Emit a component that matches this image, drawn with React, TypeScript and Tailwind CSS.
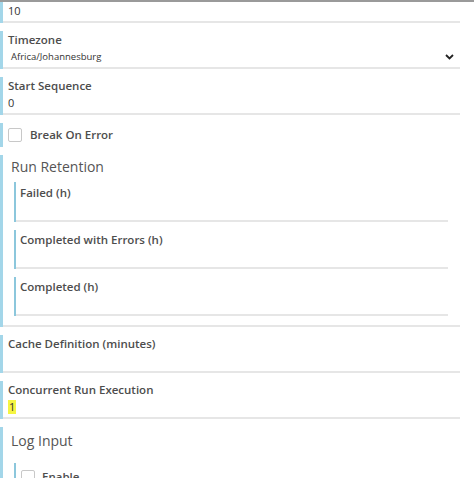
import React from "react";

const font = { fontFamily: '"Open Sans", "Noto Sans", sans-serif' };

function Field({ label, value, highlight, select }: { label: string; value?: string; highlight?: boolean; select?: boolean }) {
  return (
    <div className="flex flex-col pl-[5px] pt-[1px] pb-[1px] border-b-2 border-[#e6e6e6]">
      <div className="text-[11.5px] leading-[16px] font-semibold text-[#4d4d4d]">{label}</div>
      <div className="h-[18px] flex items-center">
        {select ? (
          <div className="flex items-center w-full pl-[3px] pr-[6px]">
            <span className="text-[9.5px] text-[#333]">{value}</span>
            <svg className="ml-auto" width="9" height="6" viewBox="0 0 9 6">
              <path d="M1 1 L4.5 4.5 L8 1" fill="none" stroke="#222" strokeWidth="1.8" />
            </svg>
          </div>
        ) : highlight ? (
          <span className="text-[11px] text-[#333] bg-[#f5f542] px-[1px] leading-[14px]">{value}</span>
        ) : (
          <span className="text-[11px] text-[#333]">{value}</span>
        )}
      </div>
    </div>
  );
}

function Row({ children, className = "" }: { children: React.ReactNode; className?: string }) {
  return (
    <div className={"flex mr-[14px] " + className}>
      <div className="w-[3px] shrink-0 bg-[#a3d6e9]" />
      <div className="flex-1 min-w-0">{children}</div>
    </div>
  );
}

function InnerRow({ children, className = "" }: { children: React.ReactNode; className?: string }) {
  return (
    <div className={"flex ml-[11px] mr-[12px] " + className}>
      <div className="w-[2px] shrink-0 bg-[#8cc7dc]" />
      <div className="flex-1 min-w-0">{children}</div>
    </div>
  );
}

function InnerField({ label, first }: { label: string; first?: boolean }) {
  return (
    <div className={"flex flex-col pl-[4px] pb-[1px] border-b-2 border-[#e6e6e6] " + (first ? "pt-[3px]" : "pt-[2px]")}>
      <div className="text-[11.5px] leading-[16px] font-semibold text-[#4d4d4d]">{label}</div>
      <div className="h-[18px]" />
    </div>
  );
}

function Checkbox() {
  return <div className="w-[14px] h-[14px] border border-[#c8c8c8] rounded-[2px] bg-white shrink-0" />;
}

export default function App() {
  return (
    <div className="w-[474px] h-[478px] overflow-hidden bg-white" style={font}>
      <div className="h-[2px] bg-[#9a9a9a]" />
      <Row>
        <div className="pl-[5px] h-[21px] flex items-center border-b-2 border-[#e6e6e6]">
          <span className="text-[11px] text-[#333]">10</span>
        </div>
      </Row>
      <Row className="mt-[8px]">
        <Field label="Timezone" value="Africa/Johannesburg" select />
      </Row>
      <Row className="mt-[8px]">
        <Field label="Start Sequence" value="0" />
      </Row>
      <Row className="mt-[8px]">
        <div className="h-[24px] flex items-center pl-[5px] gap-[8px]">
          <Checkbox />
          <span className="text-[11.5px] font-semibold text-[#4d4d4d]">Break On Error</span>
        </div>
      </Row>
      <Row className="mt-[8px]">
        <div className="border-b-2 border-[#e6e6e6] pb-[9px]">
          <div className="pl-[8px] text-[14px] leading-[24px] text-[#555]">Run Retention</div>
          <InnerRow className="mt-[3px]">
            <InnerField label="Failed (h)" first />
          </InnerRow>
          <InnerRow className="mt-[8px]">
            <InnerField label="Completed with Errors (h)" />
          </InnerRow>
          <InnerRow className="mt-[8px]">
            <InnerField label="Completed (h)" />
          </InnerRow>
        </div>
      </Row>
      <Row className="mt-[8px]">
        <Field label="Cache Definition (minutes)" value="" />
      </Row>
      <Row className="mt-[8px]">
        <Field label="Concurrent Run Execution" value="1" highlight />
      </Row>
      <Row className="mt-[8px]">
        <div>
          <div className="pl-[8px] pt-[2px] text-[14px] leading-[24px] text-[#555]">Log Input</div>
          <InnerRow className="mt-[10px]">
            <div className="flex items-center gap-[7px] pl-[5px] pt-[3px] h-[24px]">
              <Checkbox />
              <span className="text-[11.5px] font-semibold text-[#4d4d4d]">Enable</span>
            </div>
          </InnerRow>
        </div>
      </Row>
    </div>
  );
}
